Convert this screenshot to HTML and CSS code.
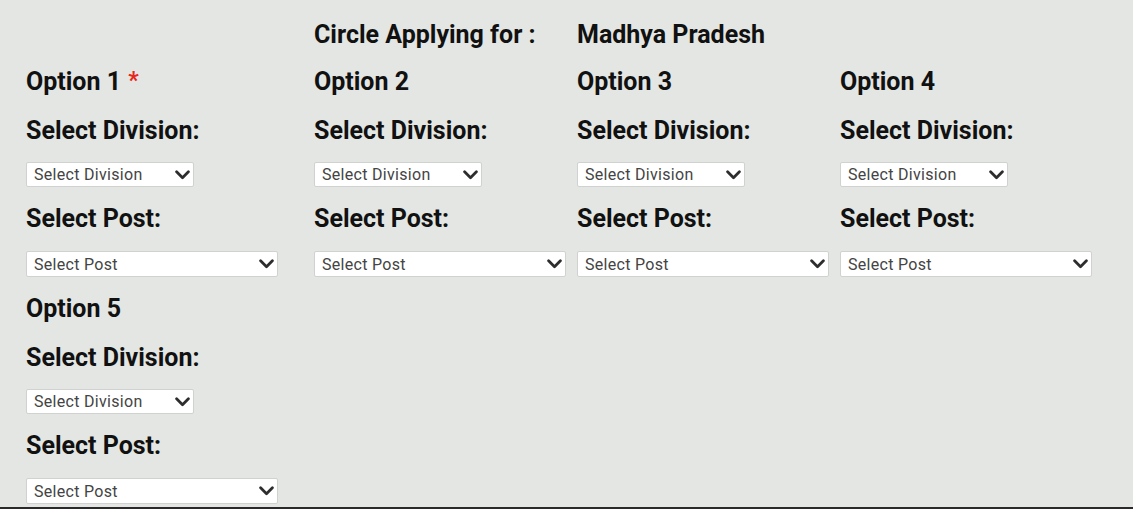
FILE: index.html
```html
<!DOCTYPE html>
<html lang="en">
<head>
<meta charset="utf-8">
<title>Circle Options</title>
<link rel="stylesheet" href="styles.css">
</head>
<body>
<div class="page">
  <div class="grid">
    <div class="cell"></div>
    <div class="cell head">Circle Applying for :</div>
    <div class="cell head">Madhya Pradesh</div>
    <div class="cell"></div>

    <div class="opt">
      <div class="opt-title">Option 1 <span class="req">*</span></div>
      <div class="lbl">Select Division:</div>
      <div class="sel sel-div"><select><option>Select Division</option></select><svg class="chev" viewBox="0 0 14 9"><path d="M1.5 1.5 L7 7 L12.5 1.5" /></svg></div>
      <div class="lbl lbl-post">Select Post:</div>
      <div class="sel sel-post"><select><option>Select Post</option></select><svg class="chev" viewBox="0 0 14 9"><path d="M1.5 1.5 L7 7 L12.5 1.5" /></svg></div>
    </div>
    <div class="opt">
      <div class="opt-title">Option 2</div>
      <div class="lbl">Select Division:</div>
      <div class="sel sel-div"><select><option>Select Division</option></select><svg class="chev" viewBox="0 0 14 9"><path d="M1.5 1.5 L7 7 L12.5 1.5" /></svg></div>
      <div class="lbl lbl-post">Select Post:</div>
      <div class="sel sel-post"><select><option>Select Post</option></select><svg class="chev" viewBox="0 0 14 9"><path d="M1.5 1.5 L7 7 L12.5 1.5" /></svg></div>
    </div>
    <div class="opt">
      <div class="opt-title">Option 3</div>
      <div class="lbl">Select Division:</div>
      <div class="sel sel-div"><select><option>Select Division</option></select><svg class="chev" viewBox="0 0 14 9"><path d="M1.5 1.5 L7 7 L12.5 1.5" /></svg></div>
      <div class="lbl lbl-post">Select Post:</div>
      <div class="sel sel-post"><select><option>Select Post</option></select><svg class="chev" viewBox="0 0 14 9"><path d="M1.5 1.5 L7 7 L12.5 1.5" /></svg></div>
    </div>
    <div class="opt">
      <div class="opt-title">Option 4</div>
      <div class="lbl">Select Division:</div>
      <div class="sel sel-div"><select><option>Select Division</option></select><svg class="chev" viewBox="0 0 14 9"><path d="M1.5 1.5 L7 7 L12.5 1.5" /></svg></div>
      <div class="lbl lbl-post">Select Post:</div>
      <div class="sel sel-post"><select><option>Select Post</option></select><svg class="chev" viewBox="0 0 14 9"><path d="M1.5 1.5 L7 7 L12.5 1.5" /></svg></div>
    </div>

    <div class="opt">
      <div class="opt-title">Option 5</div>
      <div class="lbl">Select Division:</div>
      <div class="sel sel-div"><select><option>Select Division</option></select><svg class="chev" viewBox="0 0 14 9"><path d="M1.5 1.5 L7 7 L12.5 1.5" /></svg></div>
      <div class="lbl lbl-post">Select Post:</div>
      <div class="sel sel-post"><select><option>Select Post</option></select><svg class="chev" viewBox="0 0 14 9"><path d="M1.5 1.5 L7 7 L12.5 1.5" /></svg></div>
    </div>
  </div>
</div>
</body>
</html>
```
FILE: styles.css
```css
* { box-sizing: border-box; }
html, body {
  margin: 0;
  padding: 0;
  background: #e3e6e2;
}
body {
  font-family: Roboto, "Liberation Sans", Arial, sans-serif;
  color: #111;
  overflow: hidden;
}
.page {
  height: 509px;
  border-bottom: 2px solid #2a2a2a;
  padding: 15px 0 0 26px;
  overflow: hidden;
}
.grid {
  display: grid;
  grid-template-columns: 288px 263px 263px 1fr;
  row-gap: 7px;
}
.cell.head {
  font-weight: 700;
  font-size: 25px;
  line-height: 40px;
  height: 40px;
  white-space: nowrap;
}
.grid > .cell:nth-child(-n+4) {
  margin-bottom: -5px;
}
.opt {
  display: flex;
  flex-direction: column;
  align-items: flex-start;
}
.opt-title, .lbl {
  font-weight: 700;
  font-size: 25px;
  line-height: 40px;
  height: 40px;
  white-space: nowrap;
}
.opt-title { margin-top: 5px; }
.req {
  color: #e8271c;
  font-size: 23px;
  position: relative;
  top: -2px;
  margin-left: 1px;
}
.lbl { margin-top: 9px; }
.lbl-post { margin-top: 12px; }
.sel {
  position: relative;
  margin-top: 11px;
  background: #fff;
  border: 1px solid #cfd2ce;
  border-radius: 2px;
  height: 25px;
}
.sel-div { width: 168px; }
.sel-post { width: 252px; height: 26px; margin-top: 12px; }
.sel select {
  -webkit-appearance: none;
  appearance: none;
  border: 0;
  outline: 0;
  background: transparent;
  width: 100%;
  height: 100%;
  padding: 0 0 0 7px;
  font-family: Roboto, "Liberation Sans", Arial, sans-serif;
  font-size: 16px;
  letter-spacing: 0.3px;
  color: #444;
}
.chev {
  position: absolute;
  right: 3px;
  top: 50%;
  width: 15px;
  height: 10px;
  margin-top: -5px;
  pointer-events: none;
}
.chev path {
  fill: none;
  stroke: #2d2d2d;
  stroke-width: 2.6;
  stroke-linecap: round;
  stroke-linejoin: round;
}
```
